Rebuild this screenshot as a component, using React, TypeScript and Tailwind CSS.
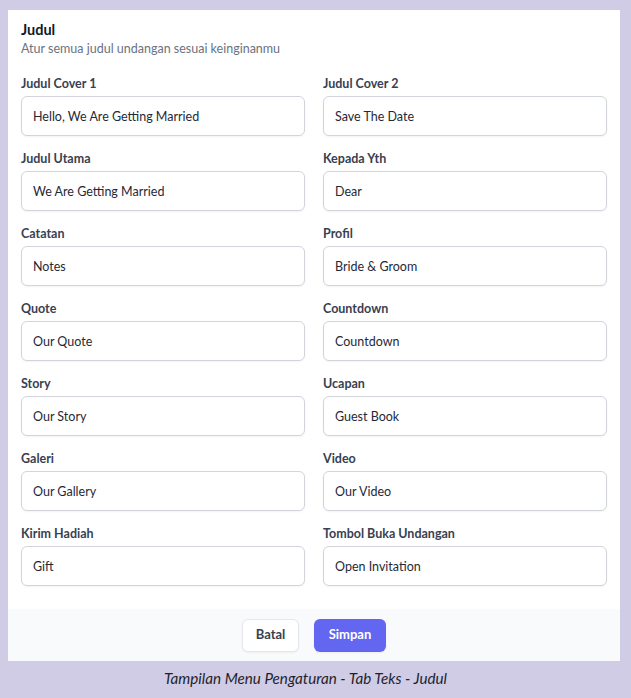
const fields: [string, string][] = [
  ['Judul Cover 1', 'Hello, We Are Getting Married'],
  ['Judul Cover 2', 'Save The Date'],
  ['Judul Utama', 'We Are Getting Married'],
  ['Kepada Yth', 'Dear'],
  ['Catatan', 'Notes'],
  ['Profil', 'Bride & Groom'],
  ['Quote', 'Our Quote'],
  ['Countdown', 'Countdown'],
  ['Story', 'Our Story'],
  ['Ucapan', 'Guest Book'],
  ['Galeri', 'Our Gallery'],
  ['Video', 'Our Video'],
  ['Kirim Hadiah', 'Gift'],
  ['Tombol Buka Undangan', 'Open Invitation']
]

function Field({ label, value }: { label: string; value: string }) {
  return (
    <div className="flex flex-col">
      <label className="h-[18px] text-[12.5px] font-bold leading-[18px] text-[#374151]">
        {label}
      </label>
      <input
        readOnly
        defaultValue={value}
        className="mt-[3px] h-[40px] w-full rounded-[6px] border border-[#d1d5db] bg-white px-[11px] text-[12.5px] text-[#1f2937] shadow-[0_1px_2px_rgba(0,0,0,0.05)] outline-none"
      />
    </div>
  )
}

export default function App() {
  return (
    <div
      className="flex h-[698px] w-[631px] flex-col bg-[#d0cce5]"
      style={{ fontFamily: 'Lato, Inter, sans-serif' }}
    >
      <div className="mx-[8px] mt-[10px] w-[612px] bg-white">
        <div className="px-[13px] pt-[10px] pb-[23px]">
          <h2 className="text-[14.5px] font-bold leading-[20px] text-[#111827]">Judul</h2>
          <p className="text-[12.5px] leading-[18px] text-[#6b7280]">
            Atur semua judul undangan sesuai keinginanmu
          </p>

          <div className="mt-[17px] grid grid-cols-2 gap-x-[18px] gap-y-[14px]">
            {fields.map(([label, value]) => (
              <Field key={label} label={label} value={value} />
            ))}
          </div>
        </div>

        <div className="flex h-[52px] items-center justify-center gap-[15px] bg-[#f9fafb]">
          <button className="h-[33px] w-[57px] rounded-[6px] border border-[#e5e7eb] bg-white text-[13px] font-bold text-[#374151] shadow-[0_1px_2px_rgba(0,0,0,0.05)]">
            Batal
          </button>
          <button className="h-[33px] w-[72px] rounded-[6px] bg-[#6366f1] text-[13px] font-bold text-white shadow-[0_1px_2px_rgba(0,0,0,0.05)]">
            Simpan
          </button>
        </div>
      </div>

      <p
        className="mt-[7px] pr-[20px] text-center text-[15.2px] italic leading-[20px] text-[#1f1f2e]"
        style={{ fontFamily: 'Lato, "Open Sans", sans-serif' }}
      >
        Tampilan Menu Pengaturan - Tab Teks - Judul
      </p>
    </div>
  )
}
